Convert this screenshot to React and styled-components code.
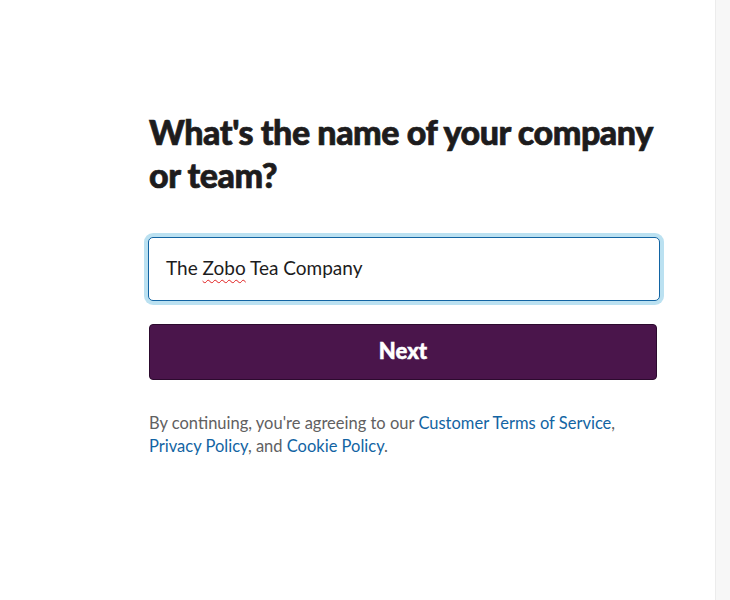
import React from "react";
import styled, { createGlobalStyle } from "styled-components";

const GlobalStyle = createGlobalStyle`
  html, body {
    margin: 0;
    padding: 0;
    background: #ffffff;
  }
  body {
    font-family: Lato, "Noto Sans", sans-serif;
    -webkit-font-smoothing: antialiased;
  }
`;

const Page = styled.div`
  display: flex;
  width: 730px;
  height: 600px;
  overflow: hidden;
`;

const Main = styled.main`
  flex: 1;
  padding: 110px 0 0 149px;
`;

const Gutter = styled.aside`
  width: 14px;
  flex: none;
  background: #f7f7f7;
  border-left: 1px solid #ececec;
`;

const Form = styled.div`
  width: 508px;
  display: flex;
  flex-direction: column;
`;

const Heading = styled.h1`
  margin: 0;
  font-family: Lato, sans-serif;
  font-weight: 900;
  font-size: 34px;
  line-height: 43px;
  letter-spacing: -0.45px;
  -webkit-text-stroke: 0.7px #1d1c1d;
  color: #1d1c1d;
`;

const Field = styled.div`
  margin-top: 41px;
  height: 64px;
  box-sizing: border-box;
  border: 1px solid #1264a3;
  border-radius: 5px;
  box-shadow: 0 0 0 4px rgba(29, 155, 209, 0.3);
  padding: 0 0 4px 17px;
  display: flex;
  align-items: center;
  font-family: Lato, sans-serif;
  font-size: 19px;
  color: #1d1c1d;
  background: #fff;
  margin-left: -1px;
  width: 512px;
`;

const Misspelled = styled.span`
  text-decoration: underline wavy #e01e1e;
  text-decoration-thickness: 1px;
  text-underline-offset: 4px;
`;

const Button = styled.button`
  margin-top: 23px;
  height: 56px;
  padding: 0 0 3px;
  border: 1px solid #2c0a2e;
  border-radius: 4px;
  background: #4a154b;
  color: #ffffff;
  font-family: Lato, sans-serif;
  font-weight: 900;
  font-size: 22px;
  -webkit-text-stroke: 0.5px #ffffff;
  cursor: pointer;
`;

const Legal = styled.p`
  margin: 32px 0 0;
  font-family: Lato, sans-serif;
  font-size: 16.5px;
  line-height: 23px;
  color: #616061;
`;

const Link = styled.a`
  color: #1264a3;
  text-decoration: none;
`;

export default function App() {
  return (
    <>
      <GlobalStyle />
      <Page>
        <Main>
          <Form>
            <Heading>What's the name of your company or team?</Heading>
            <Field role="textbox">
              The&nbsp;<Misspelled>Zobo</Misspelled>&nbsp;Tea Company
            </Field>
            <Button>Next</Button>
            <Legal>
              By continuing, you're agreeing to our{" "}
              <Link href="#">Customer Terms of Service</Link>,{" "}
              <Link href="#">Privacy Policy</Link>, and{" "}
              <Link href="#">Cookie Policy</Link>.
            </Legal>
          </Form>
        </Main>
        <Gutter />
      </Page>
    </>
  );
}
